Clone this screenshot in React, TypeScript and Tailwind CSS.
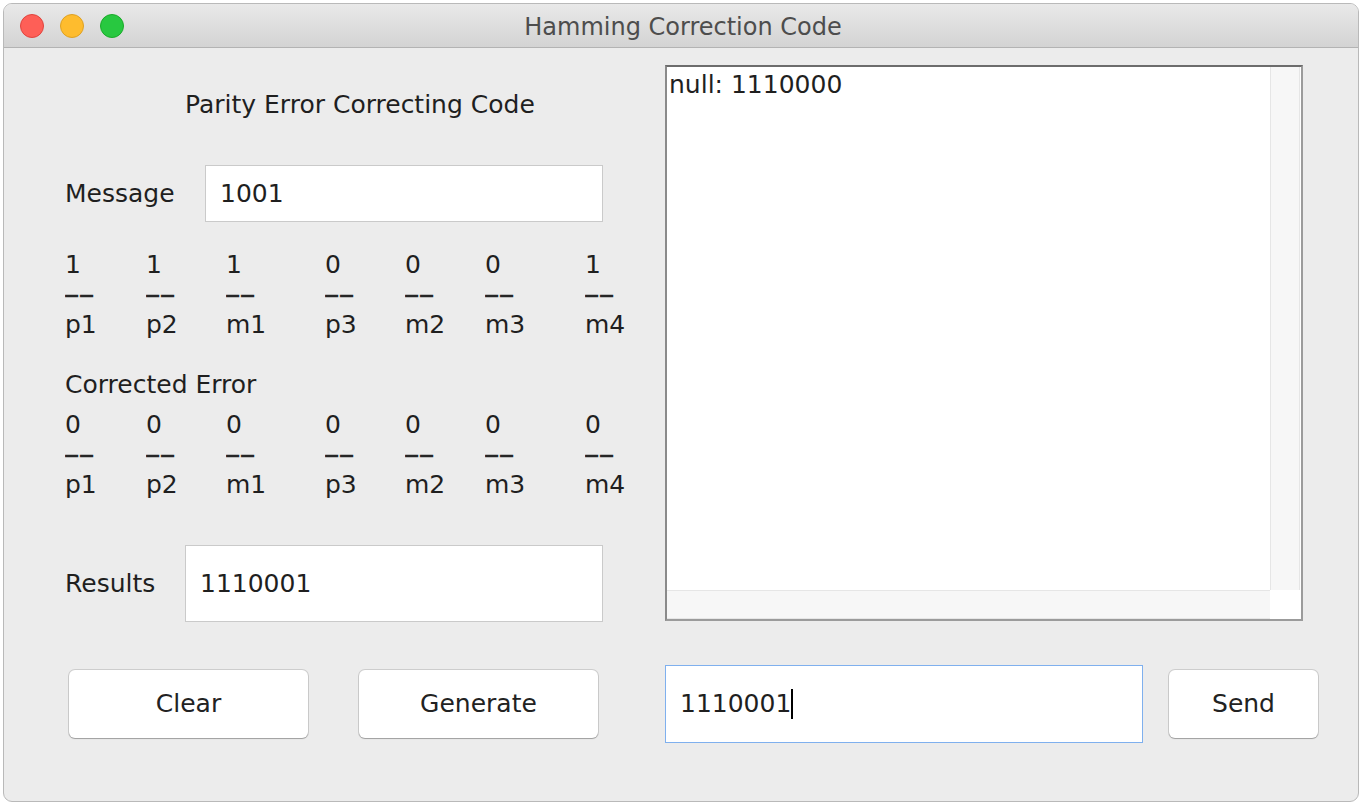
import React from 'react'

const labels = ['p1', 'p2', 'm1', 'p3', 'm2', 'm3', 'm4']
const sent = ['1', '1', '1', '0', '0', '0', '1']
const corrected = ['0', '0', '0', '0', '0', '0', '0']

const BitTable: React.FC<{ bits: string[] }> = ({ bits }) => (
  <div className="grid grid-cols-[81px_80px_99px_80px_80px_100px_auto]">
    {bits.map((b, i) => (
      <div key={i} className="flex flex-col">
        <div className="h-[30px] leading-[30px]">{b}</div>
        <div className="flex h-[30px] items-start">
          <span className="inline-block origin-left scale-x-[1.75] text-[15px] font-bold leading-[17px] tracking-[1px] text-[#262626] [text-shadow:0_0.7px_0_#262626]">
            __
          </span>
        </div>
        <div className="h-[30px] leading-[30px]">{labels[i]}</div>
      </div>
    ))}
  </div>
)

const MacButton: React.FC<{ label: string; className?: string }> = ({ label, className }) => (
  <button
    className={`h-[68px] rounded-[6px] bg-white text-[25px] text-[#222] shadow-[0_0_0_1px_rgba(0,0,0,0.13),0_1px_1px_rgba(0,0,0,0.22)] ${className ?? ''}`}
  >
    {label}
  </button>
)

export default function App() {
  return (
    <div className="min-h-screen bg-white p-[3px] font-['DejaVu_Sans',sans-serif] text-[25px] text-[#1f1f1f]">
      <div className="flex h-[799px] flex-col overflow-hidden rounded-[9px] border border-[#b9b9b9] bg-[#ececec]">
        {/* title bar */}
        <div className="grid h-[44px] grid-cols-[1fr_auto_1fr] items-center border-b border-[#b3b3b3] bg-gradient-to-b from-[#e9e9e9] to-[#d3d3d3]">
          <div className="flex gap-4 pl-[16px]">
            <span className="h-[24px] w-[24px] rounded-full border border-[#e0443e] bg-[#fe5f57]" />
            <span className="h-[24px] w-[24px] rounded-full border border-[#dea123] bg-[#febc2e]" />
            <span className="h-[24px] w-[24px] rounded-full border border-[#1aab29] bg-[#28c840]" />
          </div>
          <div className="pl-[4px] pt-[3px] text-[24px] text-[#4d4d4d]">Hamming Correction Code</div>
          <div />
        </div>

        {/* body */}
        <div className="flex gap-[62px] pl-[61px]">
          <div className="flex w-[538px] flex-col">
            <div className="ml-[120px] mt-[42px] h-[30px] leading-[30px]">Parity Error Correcting Code</div>

            <div className="mt-[45px] flex items-center">
              <span className="w-[140px]">Message</span>
              <div className="flex h-[57px] w-[398px] items-center border border-[#cacaca] bg-white pl-[14px]">1001</div>
            </div>

            <div className="mt-[28px]">
              <BitTable bits={sent} />
            </div>

            <div className="mt-[30px] h-[30px] leading-[30px]">Corrected Error</div>

            <div className="mt-[10px]">
              <BitTable bits={corrected} />
            </div>

            <div className="mt-[45px] flex items-center">
              <span className="w-[120px]">Results</span>
              <div className="flex h-[77px] w-[418px] items-center border border-[#cacaca] bg-white pl-[14px]">1110001</div>
            </div>
          </div>

          {/* log area */}
          <div className="mt-[17px] flex h-[556px] w-[638px] flex-col border-2 border-b-[#9b9b9b] border-l-[#8a8a8a] border-r-[#9b9b9b] border-t-[#6c6c6c] bg-white">
            <div className="flex flex-1">
              <div className="flex-1 pl-[2px] pt-[3px] leading-[30px]">null: 1110000</div>
              <div className="mr-[1px] w-[30px] border-l border-r border-[#e6e6e6] bg-[#f7f7f7]" />
            </div>
            <div className="flex h-[29px]">
              <div className="flex-1 border-b border-t border-[#e6e6e6] bg-[#f7f7f7]" />
              <div className="w-[31px] bg-white" />
            </div>
          </div>
        </div>

        {/* bottom controls */}
        <div className="mt-[43px] flex items-center pl-[65px]">
          <MacButton label="Clear" className="w-[239px]" />
          <MacButton label="Generate" className="ml-[51px] w-[239px]" />
          <div className="ml-[67px] flex h-[78px] w-[478px] items-center border border-[#7fb0ee] bg-white pl-[14px]">
            1110001
            <span className="inline-block h-[30px] w-[2px] bg-black" />
          </div>
          <MacButton label="Send" className="ml-[26px] w-[149px]" />
        </div>
      </div>
    </div>
  )
}
